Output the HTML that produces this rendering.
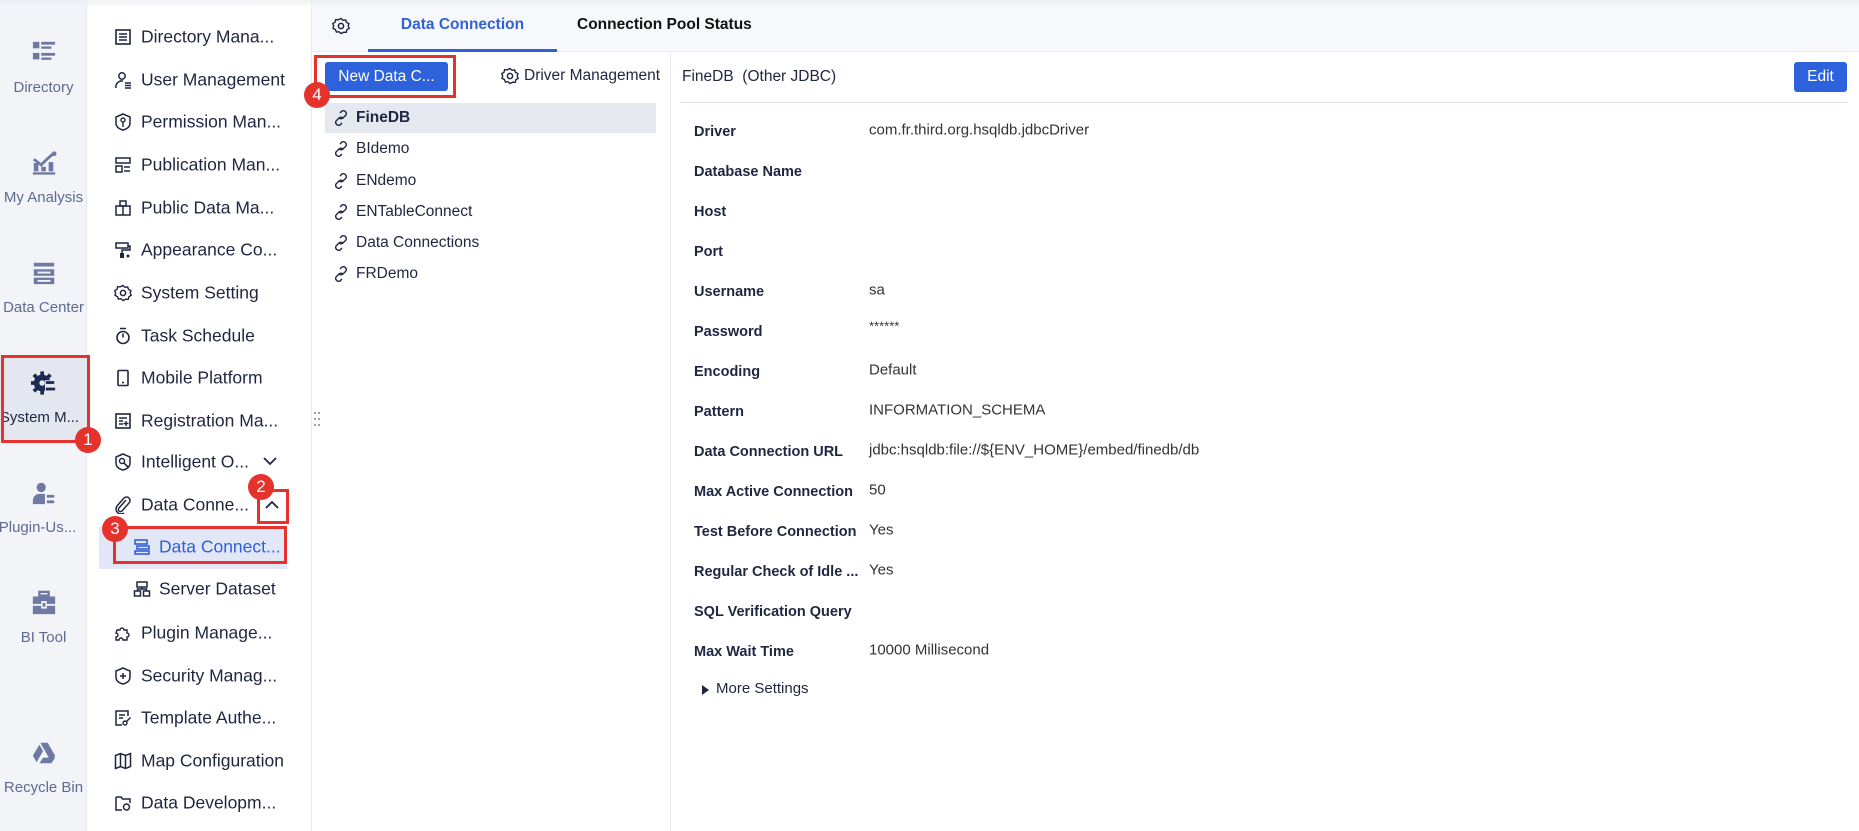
<!DOCTYPE html>
<html><head><meta charset="utf-8"><style>
*{margin:0;padding:0;box-sizing:border-box}
body{width:1859px;height:831px;overflow:hidden;background:#fff;font-family:"Liberation Sans",Arial,sans-serif;position:relative;color:#1f2640}
.a{position:absolute;white-space:nowrap}
#side{left:0;top:0;width:87px;height:831px;background:#f3f4f8;border-right:1px solid #e6e8ee}
.si{position:absolute;left:0;width:87px;text-align:center;font-size:15px;color:#5e6a90}
.si svg{display:block;margin:0 auto}
#menu{left:87px;top:0;width:225px;height:831px;background:#fff;border-right:1px solid #e8eaef}
.mi{position:absolute;left:141px;font-size:17.5px;color:#1f2640;transform:translateY(-50%)}
.ic{position:absolute;left:114px;width:18px;height:18px;transform:translateY(-50%)}
#top{left:312px;top:0;width:1547px;height:52px;background:#f7f8fb;border-bottom:1px solid #eceef2}
.badge{position:absolute;width:26px;height:26px;border-radius:50%;background:#e5322d;color:#fff;font-size:17px;text-align:center;line-height:26px;transform:translate(-50%,-50%);z-index:10}
.rb{position:absolute;border:3px solid #e5322d;z-index:9}
.li{position:absolute;left:356px;font-size:15.5px;color:#1f2640;transform:translateY(-50%)}
.lk{position:absolute;left:332px;transform:translateY(-50%)}
.lb{position:absolute;left:694px;font-size:14.5px;font-weight:bold;color:#1f2640;transform:translateY(-50%)}
.vl{position:absolute;left:869px;font-size:15px;color:#333;transform:translateY(-50%)}
</style></head><body>
<div class="a" style="left:0;top:0;width:1859px;height:6px;background:linear-gradient(#e8e9ee,#f3f4f8);z-index:5;opacity:.6"></div>
<div class="a" id="side"></div>
<div class="a" style="left:0;top:355px;width:89px;height:87px;background:#e5e7f0"></div>
<div class="si" style="top:40px"><svg width="26" height="24" viewBox="0 0 28 26"><rect x="2" y="2" width="7" height="7" fill="#6e7aa3"/><rect x="11" y="2" width="15" height="3" fill="#6e7aa3"/><rect x="11" y="7" width="11" height="2.5" fill="#6e7aa3"/><rect x="2" y="14" width="7" height="7" fill="#6e7aa3"/><rect x="11" y="14" width="15" height="3" fill="#6e7aa3"/><rect x="11" y="19" width="11" height="2.5" fill="#6e7aa3"/></svg><div style="margin-top:15px">Directory</div></div>
<div class="si" style="top:150px"><svg width="26" height="26" viewBox="0 0 28 28"><path d="M3 10l8 6 6-6 8-7" stroke="#6e7aa3" stroke-width="3" fill="none"/><circle cx="25" cy="4" r="2.5" fill="#6e7aa3"/><rect x="3" y="14" width="5" height="9" fill="#6e7aa3"/><rect x="11" y="18" width="5" height="5" fill="#6e7aa3"/><rect x="19" y="13" width="5" height="10" fill="#6e7aa3"/><rect x="2" y="24" width="24" height="2.5" fill="#6e7aa3"/></svg><div style="margin-top:13px">My Analysis</div></div>
<div class="si" style="top:260px"><svg width="26" height="26" viewBox="0 0 28 28"><rect x="3" y="3" width="22" height="4" fill="#6e7aa3"/><rect x="3" y="10" width="22" height="7" fill="#6e7aa3"/><rect x="7" y="12.5" width="14" height="2" fill="#f3f4f8"/><rect x="3" y="19" width="22" height="7" fill="#6e7aa3"/><rect x="7" y="21.5" width="14" height="2" fill="#f3f4f8"/></svg><div style="margin-top:13px">Data Center</div></div>
<div class="si" style="top:370px;color:#1f2640"><svg width="26" height="26" viewBox="0 0 28 28"><g fill="#1e2a52"><circle cx="12" cy="14" r="9"/><rect x="10" y="1.5" width="4" height="4"/><rect x="10" y="22.5" width="4" height="4"/><rect x="0" y="12" width="4" height="4"/><rect x="2.5" y="4.5" width="4" height="4" transform="rotate(45 4.5 6.5)"/><rect x="2.5" y="19.5" width="4" height="4" transform="rotate(45 4.5 21.5)"/><rect x="17.5" y="4.5" width="4" height="4" transform="rotate(45 19.5 6.5)"/></g><rect x="15" y="11" width="14" height="17" fill="#e5e7f0"/><circle cx="12" cy="14" r="3" fill="#e5e7f0"/><rect x="16" y="12" width="9" height="3" fill="#1e2a52"/><rect x="16" y="19" width="10" height="3" fill="#1e2a52"/></svg><div style="margin-top:13px;margin-left:-8px">System M...</div></div>
<div class="si" style="top:480px"><svg width="26" height="26" viewBox="0 0 28 28"><circle cx="11" cy="8" r="5" fill="#6e7aa3"/><path d="M2 26v-4a7 7 0 0 1 7-7h6v11z" fill="#6e7aa3"/><rect x="17" y="16" width="8" height="3" fill="#6e7aa3"/><rect x="17" y="22" width="8" height="3" fill="#6e7aa3"/></svg><div style="margin-top:13px;margin-left:-12px">Plugin-Us...</div></div>
<div class="si" style="top:590px"><svg width="26" height="26" viewBox="0 0 28 28"><rect x="9" y="2" width="10" height="4" fill="none" stroke="#6e7aa3" stroke-width="2.5"/><rect x="2" y="7" width="24" height="8" fill="#6e7aa3"/><rect x="2" y="17" width="24" height="9" fill="#6e7aa3"/><rect x="11" y="12" width="6" height="8" fill="#f3f4f8"/><rect x="12.5" y="14" width="3" height="4" fill="#6e7aa3"/></svg><div style="margin-top:13px">BI Tool</div></div>
<div class="si" style="top:740px"><svg width="26" height="26" viewBox="0 0 28 28"><path d="M10 3h8l8 14-4 7-8-14z" fill="#6e7aa3"/><path d="M9 5l4 7-7 12-4-7z" fill="#6e7aa3"/><path d="M13 19h13l-4 6H9z" fill="#6e7aa3"/></svg><div style="margin-top:13px">Recycle Bin</div></div>

<div class="a" id="menu"></div>
<div class="rb" style="left:1px;top:355px;width:89px;height:88px"></div>
<div class="badge" style="left:88px;top:440px">1</div>
<div class="a" style="left:99px;top:527px;width:188px;height:42px;background:#e2e7f8"></div>
<svg class="ic" style="top:37px" viewBox="0 0 18 18"><rect x="2" y="2" width="14" height="14" fill="none" stroke="#1f2640" stroke-width="1.6"/><path d="M5 6h8M5 9h8M5 12h8" stroke="#1f2640" stroke-width="1.4"/></svg><div class="mi" style="top:37px">Directory Mana...</div>
<svg class="ic" style="top:80px" viewBox="0 0 18 18"><circle cx="8" cy="5" r="3.2" fill="none" stroke="#1f2640" stroke-width="1.5"/><path d="M2 17a6 6 0 0 1 7-7M11 12h6M11 14.5h6M11 17h6" stroke="#1f2640" stroke-width="1.5" fill="none"/></svg><div class="mi" style="top:80px">User Management</div>
<svg class="ic" style="top:122px" viewBox="0 0 18 18"><path d="M9 1l7 3v6c0 4-3 6-7 7-4-1-7-3-7-7V4z" fill="none" stroke="#1f2640" stroke-width="1.5"/><circle cx="9" cy="7" r="2" fill="none" stroke="#1f2640" stroke-width="1.4"/><path d="M9 9v5" stroke="#1f2640" stroke-width="1.4"/></svg><div class="mi" style="top:122px">Permission Man...</div>
<svg class="ic" style="top:165px" viewBox="0 0 18 18"><rect x="2" y="2" width="14" height="5" fill="none" stroke="#1f2640" stroke-width="1.5"/><rect x="2" y="10" width="6" height="6" fill="none" stroke="#1f2640" stroke-width="1.5"/><path d="M10 11h6M10 15h6" stroke="#1f2640" stroke-width="1.5"/></svg><div class="mi" style="top:165px">Publication Man...</div>
<svg class="ic" style="top:208px" viewBox="0 0 18 18"><rect x="2" y="7" width="14" height="9" fill="none" stroke="#1f2640" stroke-width="1.5"/><rect x="6" y="2" width="6" height="5" fill="none" stroke="#1f2640" stroke-width="1.5"/><path d="M9 7v9" stroke="#1f2640" stroke-width="1.5"/></svg><div class="mi" style="top:208px">Public Data Ma...</div>
<svg class="ic" style="top:250px" viewBox="0 0 18 18"><rect x="2" y="2" width="12" height="5" fill="none" stroke="#1f2640" stroke-width="1.5"/><path d="M14 5h2v4H8v3" stroke="#1f2640" stroke-width="1.5" fill="none"/><rect x="6" y="12" width="4" height="5" fill="#1f2640"/><circle cx="14" cy="15" r="1.5" fill="#1f2640"/></svg><div class="mi" style="top:250px">Appearance Co...</div>
<svg class="ic" style="top:293px" viewBox="0 0 18 18"><path d="M9 1.5l2 1.8 2.6-.4.9 2.5 2.4 1.2-.7 2.5 1 2.3-2.3 1.3-.6 2.6-2.6-.1L9 16.5l-2-1.8-2.6.4-.9-2.5L1 11.4l.7-2.5-1-2.3L3 5.3l.6-2.6 2.6.1z" fill="none" stroke="#1f2640" stroke-width="1.4"/><circle cx="9" cy="9" r="2.6" fill="none" stroke="#1f2640" stroke-width="1.5"/></svg><div class="mi" style="top:293px">System Setting</div>
<svg class="ic" style="top:336px" viewBox="0 0 18 18"><circle cx="9" cy="10.5" r="6" fill="none" stroke="#1f2640" stroke-width="1.6"/><path d="M6 1.5h6M9 10.5V6.5" stroke="#1f2640" stroke-width="1.6"/></svg><div class="mi" style="top:336px">Task Schedule</div>
<svg class="ic" style="top:378px" viewBox="0 0 18 18"><rect x="4" y="1.5" width="10" height="15" rx="1" fill="none" stroke="#1f2640" stroke-width="1.6"/><path d="M8 13.5h2" stroke="#1f2640" stroke-width="1.6"/></svg><div class="mi" style="top:378px">Mobile Platform</div>
<svg class="ic" style="top:421px" viewBox="0 0 18 18"><rect x="2" y="2" width="14" height="14" fill="none" stroke="#1f2640" stroke-width="1.6"/><path d="M5 6h8M5 9h4M5 12h4M12 9v5M9.5 11.5h5" stroke="#1f2640" stroke-width="1.4"/></svg><div class="mi" style="top:421px">Registration Ma...</div>
<svg class="ic" style="top:462px" viewBox="0 0 18 18"><path d="M9 1l7 3v6c0 4-3 6-7 7-4-1-7-3-7-7V4z" fill="none" stroke="#1f2640" stroke-width="1.5"/><circle cx="8" cy="8" r="2.5" fill="none" stroke="#1f2640" stroke-width="1.4"/><path d="M10 10l4 4" stroke="#1f2640" stroke-width="1.6"/></svg><div class="mi" style="top:462px">Intelligent O...</div>
<svg class="a" style="left:262px;top:456px" width="16" height="10" viewBox="0 0 16 10"><path d="M2 2l6 6 6-6" stroke="#1f2640" stroke-width="1.8" fill="none"/></svg>
<svg class="ic" style="top:505px" viewBox="0 0 18 18"><path d="M12 4L5 12a2 2 0 0 0 3 3l7-8a3.5 3.5 0 0 0-5-5L3 10a5 5 0 0 0 7 7" stroke="#1f2640" stroke-width="1.5" fill="none"/></svg><div class="mi" style="top:505px">Data Conne...</div>
<svg class="a" style="left:264px;top:500px" width="16" height="10" viewBox="0 0 16 10"><path d="M2 8l6-6 6 6" stroke="#1f2640" stroke-width="1.8" fill="none"/></svg>
<svg class="ic" style="top:547px;left:133px" viewBox="0 0 18 18"><rect x="2" y="2" width="12" height="4" fill="none" stroke="#3260d8" stroke-width="1.6"/><rect x="4" y="8" width="12" height="3" fill="none" stroke="#3260d8" stroke-width="1.6"/><rect x="2" y="13" width="14" height="3" fill="none" stroke="#3260d8" stroke-width="1.6"/></svg><div class="mi" style="top:547px;left:159px;color:#3260d8">Data Connect...</div>
<svg class="ic" style="top:589px;left:133px" viewBox="0 0 18 18"><rect x="4" y="2" width="10" height="5" fill="none" stroke="#1f2640" stroke-width="1.5"/><rect x="1.5" y="11" width="6" height="5" fill="none" stroke="#1f2640" stroke-width="1.5"/><rect x="10.5" y="11" width="6" height="5" fill="none" stroke="#1f2640" stroke-width="1.5"/><path d="M9 7v2M4.5 11V9h9v2" stroke="#1f2640" stroke-width="1.5" fill="none"/></svg><div class="mi" style="top:589px;left:159px">Server Dataset</div>
<svg class="ic" style="top:633px" viewBox="0 0 18 18"><path d="M3 6h3a2 2 0 1 1 4 0h3v3a2 2 0 1 1 0 4v3H9a2 2 0 1 0-4 0H2v-3a2 2 0 1 0 0-4z" fill="none" stroke="#1f2640" stroke-width="1.4"/></svg><div class="mi" style="top:633px">Plugin Manage...</div>
<svg class="ic" style="top:676px" viewBox="0 0 18 18"><path d="M9 1l7 3v6c0 4-3 6-7 7-4-1-7-3-7-7V4z" fill="none" stroke="#1f2640" stroke-width="1.5"/><path d="M9 6v6M6 9h6" stroke="#1f2640" stroke-width="1.5"/></svg><div class="mi" style="top:676px">Security Manag...</div>
<svg class="ic" style="top:718px" viewBox="0 0 18 18"><path d="M14 7V2H2v14h6" fill="none" stroke="#1f2640" stroke-width="1.5"/><path d="M5 6h6M5 9h4" stroke="#1f2640" stroke-width="1.4"/><circle cx="11" cy="14" r="2" fill="none" stroke="#1f2640" stroke-width="1.4"/><path d="M12.5 12.5l4-4" stroke="#1f2640" stroke-width="1.5"/></svg><div class="mi" style="top:718px">Template Authe...</div>
<svg class="ic" style="top:761px" viewBox="0 0 18 18"><path d="M1.5 3.5l5-2 5 2 5-2v13l-5 2-5-2-5 2z" fill="none" stroke="#1f2640" stroke-width="1.5"/><path d="M6.5 1.5v13M11.5 3.5v13" stroke="#1f2640" stroke-width="1.5"/></svg><div class="mi" style="top:761px">Map Configuration</div>
<svg class="ic" style="top:803px" viewBox="0 0 18 18"><path d="M2 3h5l1.5 2H16v4M2 3v13h6" fill="none" stroke="#1f2640" stroke-width="1.5"/><circle cx="12.5" cy="13" r="3" fill="none" stroke="#1f2640" stroke-width="1.5"/></svg><div class="mi" style="top:803px">Data Developm...</div>
<div class="rb" style="left:257px;top:489px;width:32px;height:35px"></div>
<div class="rb" style="left:113px;top:526px;width:174px;height:38px"></div>
<div class="badge" style="left:261px;top:487px">2</div>
<div class="badge" style="left:115px;top:529px">3</div>

<div class="a" id="top"></div>
<svg class="a" style="left:332px;top:17px" width="18" height="18" viewBox="0 0 18 18"><path d="M9 1.5l2 1.8 2.6-.4.9 2.5 2.4 1.2-.7 2.5 1 2.3-2.3 1.3-.6 2.6-2.6-.1L9 16.5l-2-1.8-2.6.4-.9-2.5L1 11.4l.7-2.5-1-2.3L3 5.3l.6-2.6 2.6.1z" fill="none" stroke="#1f2640" stroke-width="1.4"/><circle cx="9" cy="9" r="2.6" fill="none" stroke="#1f2640" stroke-width="1.5"/></svg>
<div class="a" style="left:368px;top:16px;width:189px;text-align:center;font-size:15.5px;font-weight:bold;color:#3260d8">Data Connection</div>
<div class="a" style="left:368px;top:49px;width:189px;height:3px;background:#3260d8"></div>
<div class="a" style="left:577px;top:16px;font-size:15.5px;font-weight:bold;color:#111">Connection Pool Status</div>

<div class="a" style="left:670px;top:52px;width:1px;height:779px;background:#e8eaef"></div>
<svg class="a" style="left:313px;top:410px" width="8" height="18" viewBox="0 0 8 18"><g fill="#9aa3b5"><circle cx="2" cy="3" r="1.2"/><circle cx="6" cy="3" r="1.2"/><circle cx="2" cy="9" r="1.2"/><circle cx="6" cy="9" r="1.2"/><circle cx="2" cy="15" r="1.2"/><circle cx="6" cy="15" r="1.2"/></g></svg>
<div class="a" style="left:325px;top:62px;width:123px;height:29px;background:#2d62dc;border-radius:3px;color:#fff;font-size:15.5px;line-height:29px;text-align:center">New Data C...</div>
<div class="rb" style="left:314px;top:55px;width:142px;height:43px"></div>
<div class="badge" style="left:317px;top:95px">4</div>
<svg class="a" style="left:501px;top:67px" width="18" height="18" viewBox="0 0 18 18"><path d="M9 1.5l2 1.8 2.6-.4.9 2.5 2.4 1.2-.7 2.5 1 2.3-2.3 1.3-.6 2.6-2.6-.1L9 16.5l-2-1.8-2.6.4-.9-2.5L1 11.4l.7-2.5-1-2.3L3 5.3l.6-2.6 2.6.1z" fill="none" stroke="#1f2640" stroke-width="1.4"/><circle cx="9" cy="9" r="2.6" fill="none" stroke="#1f2640" stroke-width="1.5"/></svg>
<div class="a" style="left:524px;top:67px;font-size:15.5px;color:#1f2640">Driver Management</div>
<div class="a" style="left:325px;top:103px;width:331px;height:30px;background:#e6e8ef"></div>
<svg class="lk" style="top:118px" width="18" height="18" viewBox="0 0 18 18"><path d="M8 4l2-2a3 3 0 0 1 4 4l-3 3a3 3 0 0 1-4 0M10 14l-2 2a3 3 0 0 1-4-4l3-3a3 3 0 0 1 4 0" stroke="#1f2640" stroke-width="1.4" fill="none"/></svg><div class="li" style="top:118px;font-weight:bold">FineDB</div>
<svg class="lk" style="top:149px" width="18" height="18" viewBox="0 0 18 18"><path d="M8 4l2-2a3 3 0 0 1 4 4l-3 3a3 3 0 0 1-4 0M10 14l-2 2a3 3 0 0 1-4-4l3-3a3 3 0 0 1 4 0" stroke="#1f2640" stroke-width="1.4" fill="none"/></svg><div class="li" style="top:149px">BIdemo</div>
<svg class="lk" style="top:181px" width="18" height="18" viewBox="0 0 18 18"><path d="M8 4l2-2a3 3 0 0 1 4 4l-3 3a3 3 0 0 1-4 0M10 14l-2 2a3 3 0 0 1-4-4l3-3a3 3 0 0 1 4 0" stroke="#1f2640" stroke-width="1.4" fill="none"/></svg><div class="li" style="top:181px">ENdemo</div>
<svg class="lk" style="top:212px" width="18" height="18" viewBox="0 0 18 18"><path d="M8 4l2-2a3 3 0 0 1 4 4l-3 3a3 3 0 0 1-4 0M10 14l-2 2a3 3 0 0 1-4-4l3-3a3 3 0 0 1 4 0" stroke="#1f2640" stroke-width="1.4" fill="none"/></svg><div class="li" style="top:212px">ENTableConnect</div>
<svg class="lk" style="top:243px" width="18" height="18" viewBox="0 0 18 18"><path d="M8 4l2-2a3 3 0 0 1 4 4l-3 3a3 3 0 0 1-4 0M10 14l-2 2a3 3 0 0 1-4-4l3-3a3 3 0 0 1 4 0" stroke="#1f2640" stroke-width="1.4" fill="none"/></svg><div class="li" style="top:243px">Data Connections</div>
<svg class="lk" style="top:274px" width="18" height="18" viewBox="0 0 18 18"><path d="M8 4l2-2a3 3 0 0 1 4 4l-3 3a3 3 0 0 1-4 0M10 14l-2 2a3 3 0 0 1-4-4l3-3a3 3 0 0 1 4 0" stroke="#1f2640" stroke-width="1.4" fill="none"/></svg><div class="li" style="top:274px">FRDemo</div>

<div class="a" style="left:682px;top:68px;font-size:15.5px;color:#1f2640">FineDB &nbsp;(Other JDBC)</div>
<div class="a" style="left:1794px;top:62px;width:53px;height:30px;background:#2d62dc;border-radius:3px;color:#fff;font-size:15.5px;line-height:30px;text-align:center">Edit</div>
<div class="a" style="left:681px;top:102px;width:1166px;height:1px;background:#dfe1e8"></div>

<div class="lb" style="top:132px">Driver</div><div class="vl" style="top:130px">com.fr.third.org.hsqldb.jdbcDriver</div>
<div class="lb" style="top:172px">Database Name</div>
<div class="lb" style="top:212px">Host</div>
<div class="lb" style="top:252px">Port</div>
<div class="lb" style="top:292px">Username</div><div class="vl" style="top:290px">sa</div>
<div class="lb" style="top:332px">Password</div><div class="vl" style="top:326px;font-size:13px">******</div>
<div class="lb" style="top:372px">Encoding</div><div class="vl" style="top:370px">Default</div>
<div class="lb" style="top:412px">Pattern</div><div class="vl" style="top:410px">INFORMATION_SCHEMA</div>
<div class="lb" style="top:452px">Data Connection URL</div><div class="vl" style="top:450px">jdbc:hsqldb:file://${ENV_HOME}/embed/finedb/db</div>
<div class="lb" style="top:492px">Max Active Connection</div><div class="vl" style="top:490px">50</div>
<div class="lb" style="top:532px">Test Before Connection</div><div class="vl" style="top:530px">Yes</div>
<div class="lb" style="top:572px">Regular Check of Idle ...</div><div class="vl" style="top:570px">Yes</div>
<div class="lb" style="top:612px">SQL Verification Query</div>
<div class="lb" style="top:652px">Max Wait Time</div><div class="vl" style="top:650px">10000 Millisecond</div>
<div class="a" style="left:702px;top:685px;width:0;height:0;border-left:7px solid #1f2640;border-top:5px solid transparent;border-bottom:5px solid transparent"></div>
<div class="a" style="left:716px;top:680px;font-size:15px;color:#1f2640">More Settings</div>
</body></html>
